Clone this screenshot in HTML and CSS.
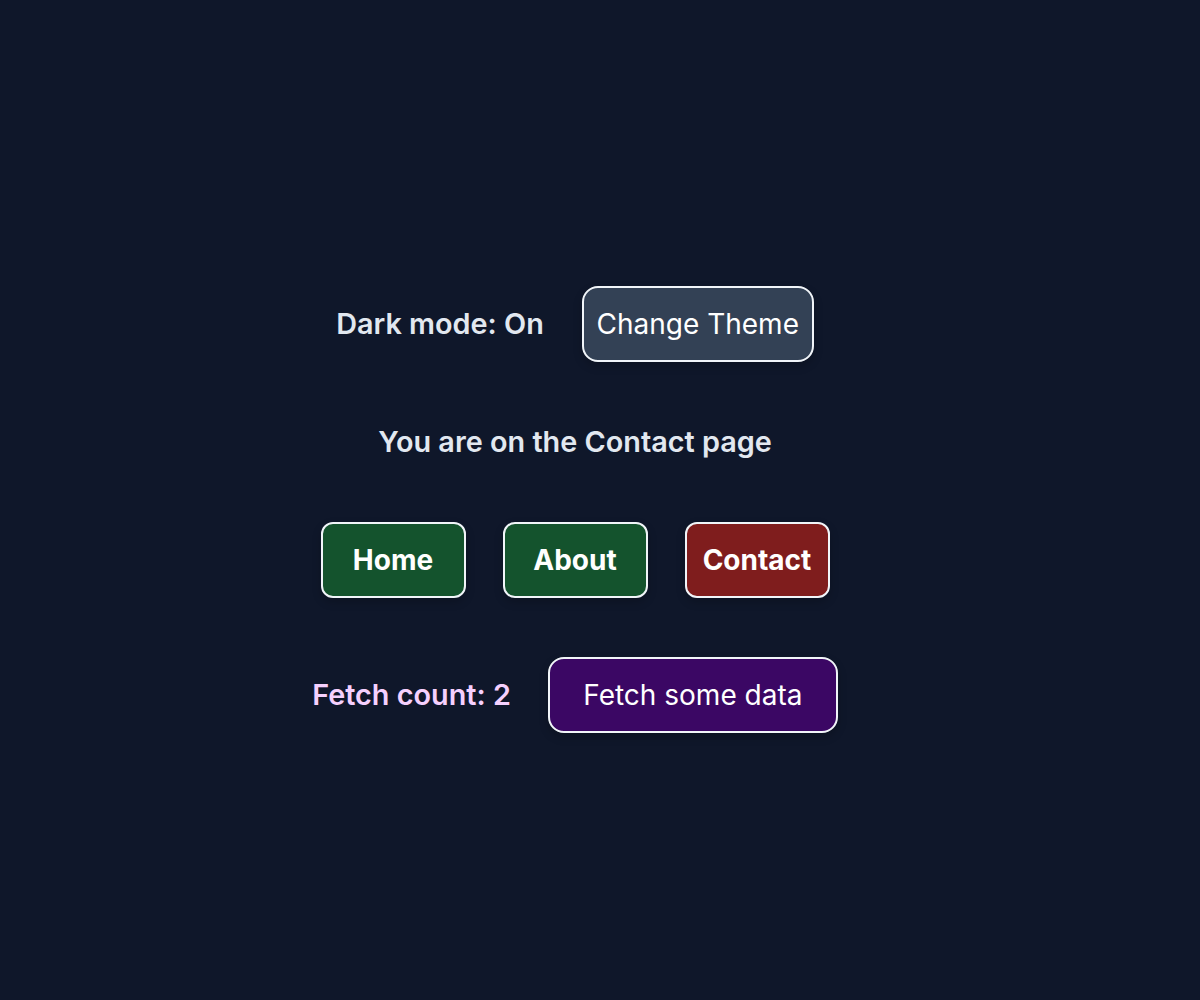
FILE: index.html
```html
<!DOCTYPE html>
<html>
<head>
<meta charset="utf-8">
<link rel="stylesheet" href="styles.css">
</head>
<body>
<main class="app">
  <div class="row theme-row">
    <span class="label">Dark mode: On</span>
    <button class="btn btn-theme">Change Theme</button>
  </div>
  <p class="page-text">You are on the Contact page</p>
  <nav class="row nav-row">
    <button class="btn nav-btn nav-green">Home</button>
    <button class="btn nav-btn nav-green">About</button>
    <button class="btn nav-btn nav-red">Contact</button>
  </nav>
  <div class="row fetch-row">
    <span class="label label-fetch">Fetch count: 2</span>
    <button class="btn btn-fetch">Fetch some data</button>
  </div>
</main>
</body>
</html>
```
FILE: styles.css
```css
html, body {
  margin: 0;
  padding: 0;
  background: #0f172a;
  height: 100%;
}
body {
  font-family: Inter, "Noto Sans", sans-serif;
  color: #e2e8f0;
}
.app {
  width: 1150px;
  height: 1000px;
  box-sizing: border-box;
  padding-top: 286px;
  display: flex;
  flex-direction: column;
  align-items: center;
}
.row {
  display: flex;
  align-items: center;
}
.label {
  font-size: 28.8px;
  line-height: 36px;
  font-weight: 600;
  color: #e2e8f0;
}
.label-fetch {
  color: #f5d0fe;
}
.btn {
  font-family: Inter, "Noto Sans", sans-serif;
  border: 2px solid #f1f5f9;
  color: #ffffff;
  cursor: pointer;
  padding: 0;
  box-shadow: 0 4px 10px rgba(0,0,0,0.2);
}
.theme-row {
  gap: 38px;
}
.btn-theme {
  width: 232px;
  height: 76px;
  border-radius: 16px;
  background: #334155;
  font-size: 28px;
  font-weight: 400;
}
.page-text {
  margin: 62px 0 0 0;
  font-size: 28.8px;
  line-height: 36px;
  font-weight: 600;
}
.nav-row {
  gap: 37px;
  margin-top: 62px;
}
.nav-btn {
  width: 145px;
  height: 76px;
  border-radius: 12px;
  font-size: 28px;
  font-weight: 700;
}
.nav-green {
  background: #14532d;
}
.nav-red {
  background: #7f1d1d;
}
.fetch-row {
  gap: 37px;
  margin-top: 59px;
}
.btn-fetch {
  width: 290px;
  height: 76px;
  border-radius: 16px;
  background: #3b0764;
  font-size: 28px;
  font-weight: 400;
}
```
